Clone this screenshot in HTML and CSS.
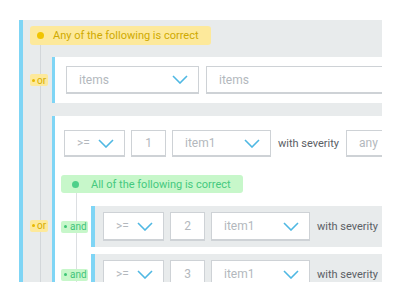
FILE: index.html
```html
<!DOCTYPE html>
<html lang="en">
<head>
  <meta charset="UTF-8" />
  <title>Condition builder</title>
  <link rel="stylesheet" href="styles.css">
</head>
<body>

  <div class="viewport">
    <div class="group any">
      <div class="group-head"><span class="dot"></span>Any of the following is correct</div>
      <div class="group-body">

        <div class="branch">
          <span class="tag or"><i></i>or</span>
          <div class="node plain">
            <div class="select wide"><span>items</span>
              <svg class="chev" viewBox="0 0 16 9" width="16" height="9"><path d="M1 1l7 7 7-7" /></svg>
            </div>
            <div class="input long">items</div>
          </div>
        </div>

        <div class="branch">
          <span class="tag or"><i></i>or</span>
          <div class="node nested">
            <div class="rule">
              <div class="select op"><span>&gt;=</span>
                <svg class="chev" viewBox="0 0 16 9" width="16" height="9"><path d="M1 1l7 7 7-7" /></svg>
              </div>
              <div class="input num">1</div>
              <div class="select item"><span>item1</span>
                <svg class="chev" viewBox="0 0 16 9" width="16" height="9"><path d="M1 1l7 7 7-7" /></svg>
              </div>
              <span class="label">with severity</span>
              <div class="input sev">any</div>
            </div>

            <div class="group all">
              <div class="group-head"><span class="dot"></span>All of the following is correct</div>
              <div class="group-body">
                <div class="branch">
                  <span class="tag and"><i></i>and</span>
                  <div class="node sub">
                    <div class="rule">
                      <div class="select op"><span>&gt;=</span>
                        <svg class="chev" viewBox="0 0 16 9" width="16" height="9"><path d="M1 1l7 7 7-7" /></svg>
                      </div>
                      <div class="input num">2</div>
                      <div class="select item"><span>item1</span>
                        <svg class="chev" viewBox="0 0 16 9" width="16" height="9"><path d="M1 1l7 7 7-7" /></svg>
                      </div>
                      <span class="label">with severity</span>
                    </div>
                  </div>
                </div>
                <div class="branch">
                  <span class="tag and"><i></i>and</span>
                  <div class="node sub">
                    <div class="rule">
                      <div class="select op"><span>&gt;=</span>
                        <svg class="chev" viewBox="0 0 16 9" width="16" height="9"><path d="M1 1l7 7 7-7" /></svg>
                      </div>
                      <div class="input num">3</div>
                      <div class="select item"><span>item1</span>
                        <svg class="chev" viewBox="0 0 16 9" width="16" height="9"><path d="M1 1l7 7 7-7" /></svg>
                      </div>
                      <span class="label">with severity</span>
                    </div>
                  </div>
                </div>
              </div>
            </div>
          </div>
        </div>

      </div>
    </div>
  </div>

</body>
</html>
```

FILE: styles.css
```css
* {
  margin: 0;
  padding: 0;
  box-sizing: border-box;
  font-family: 'Roboto', sans-serif;
}

body {
  background-color: #fff;
  color: #333;
}

.viewport {
  margin: 20px 0 0 19px;
  width: 363px;
  height: 262px;
  overflow: hidden;
}

/* Groups */
.group.any {
  width: 560px;
  min-height: 400px;
  background-color: #e8ebec;
  border-left: 4px solid #7fd5f5;
  padding: 6px 0 0 7px;
}

.group-head {
  display: flex;
  align-items: center;
  width: fit-content;
  height: 19px;
  border-radius: 3px;
  font-size: 11px;
  white-space: nowrap;
}

.group-head .dot {
  width: 7px;
  height: 7px;
  border-radius: 50%;
}

.any > .group-head {
  background-color: #fde99b;
  color: #cfa900;
  padding: 0 12px 0 7px;
}

.any > .group-head .dot {
  background-color: #f1c400;
  margin-right: 9px;
}

.all > .group-head {
  height: 18px;
  background-color: #c7f7ca;
  color: #45c97e;
  padding: 0 12px 0 11px;
}

.all > .group-head .dot {
  background-color: #4fd08a;
  margin-right: 12px;
}

.group-body {
  display: flex;
  flex-direction: column;
}

.any > .group-body {
  margin-left: 10px;
  border-left: 1px solid #d3d7da;
  padding-top: 12px;
  gap: 13px;
}

.all > .group-body {
  margin-left: 15px;
  border-left: 1px solid #dcdfe2;
  padding-top: 13px;
  gap: 7px;
}

.branch {
  display: flex;
  align-items: center;
}

.any > .group-body > .branch {
  margin-left: -11px;
}

.all > .group-body > .branch {
  margin-left: -16px;
}

/* Tags */
.tag {
  display: flex;
  align-items: center;
  height: 12px;
  border-radius: 2px;
  font-size: 10px;
  flex-shrink: 0;
}

.tag i {
  width: 3px;
  height: 3px;
  border-radius: 50%;
}

.tag.or {
  width: 18px;
  padding-left: 2px;
  background-color: #fde99b;
  color: #d6ad00;
  margin-right: 4px;
}

.tag.or i {
  background-color: #e8b900;
  margin-right: 2px;
}

.tag.and {
  width: 27px;
  padding-left: 3px;
  background-color: #c7f7ca;
  color: #41c47a;
  margin-right: 3px;
}

.tag.and i {
  background-color: #3ec576;
  margin-right: 3px;
}

/* Nodes */
.node {
  flex: 1;
  border-left: 3px solid #7fd5f5;
  background-color: #fff;
}

.node.plain {
  display: flex;
  gap: 7px;
  padding: 9px 0 9px 11px;
}

.node.nested {
  padding: 14px 0 40px 6px;
}

.node.nested > .rule {
  margin-left: 3px;
}

.node.nested > .rule .select,
.node.nested > .rule .input {
  height: 27px;
}

.group.all {
  margin-top: 18px;
}

.node.sub {
  border-left-width: 4px;
  background-color: #e8ebec;
  padding: 6px 0 6px 8px;
}

.node.sub .select,
.node.sub .input {
  height: 29px;
}

/* Controls */
.rule {
  display: flex;
  align-items: center;
  gap: 6px;
}

.select,
.input {
  display: flex;
  align-items: center;
  flex-shrink: 0;
  height: 28px;
  background-color: #fff;
  border: 1px solid #ced2d6;
  border-bottom-width: 2px;
  font-size: 12px;
  color: #b3b8bd;
  padding-left: 12px;
}

.select {
  justify-content: space-between;
  padding-right: 10px;
}

.chev path {
  fill: none;
  stroke: #4fb8e3;
  stroke-width: 1.6;
}

.select.wide {
  width: 133px;
}

.input.long {
  width: 220px;
}

.select.op {
  width: 61px;
}

.input.num {
  width: 35px;
  padding-left: 0;
  justify-content: center;
}

.select.item {
  width: 99px;
}

.label {
  font-size: 11px;
  color: #5b6065;
  white-space: nowrap;
  margin: 0 1px;
}

.input.sev {
  width: 80px;
}
```
